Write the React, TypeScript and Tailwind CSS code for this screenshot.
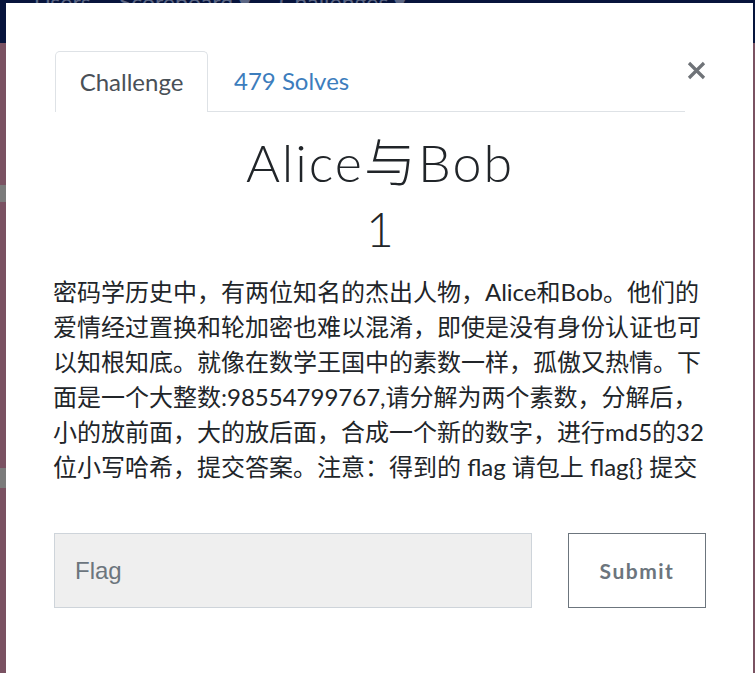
import React from "react";

const lines = [
  "密码学历史中，有两位知名的杰出人物，Alice和Bob。他们的",
  "爱情经过置换和轮加密也难以混淆，即使是没有身份认证也可",
  "以知根知底。就像在数学王国中的素数一样，孤傲又热情。下",
  "面是一个大整数:98554799767,请分解为两个素数，分解后，",
  "小的放前面，大的放后面，合成一个新的数字，进行md5的32",
  "位小写哈希，提交答案。注意：得到的 flag 请包上 flag{} 提交",
];

function Backdrop() {
  return (
    <>
      <div className="absolute left-0 top-0 w-full h-[43px] bg-[#07143c]">
        <div className="flex gap-[28px] pl-[34px] -mt-[15px] text-[23px] text-[#5b6684] font-['Lato',sans-serif]">
          <span>Users</span>
          <span>Scoreboard ▾</span>
          <span>Challenges ▾</span>
        </div>
      </div>
      <div className="absolute left-0 top-[185px] w-[6px] h-[17px] bg-[#7b7b7b]" />
      <div className="absolute left-0 top-[468px] w-[6px] h-[20px] bg-[#7b7b7b]" />
    </>
  );
}

export default function App() {
  return (
    <div className="relative w-[755px] h-[673px] overflow-hidden bg-[#7a5262] font-['Lato','Noto_Sans_CJK_SC',sans-serif]">
      <Backdrop />
      <div className="absolute left-[6px] top-[3px] right-[2px] bottom-0 bg-white pl-[48px] pr-[47px] pt-[48px]">
        <div className="flex items-start">
          <div className="flex flex-1 h-[61px] ml-[1px]">
            <div className="w-[153px] h-[61px] border border-b-0 border-[#dee2e6] rounded-t-[5px] flex items-center justify-center text-[24px] text-[#495057]">
              Challenge
            </div>
            <div className="flex-1 border-b border-[#dee2e6] flex items-center pl-[26px] text-[24px] text-[#3c7dbd]">
              479 Solves
            </div>
          </div>
          <button className="w-[21px] mt-[10px] flex justify-end">
            <svg width="19" height="19" viewBox="0 0 19 19">
              <path d="M2 2 L17 17 M17 2 L2 17" stroke="#6f7378" strokeWidth="3.2" strokeLinecap="butt" />
            </svg>
          </button>
        </div>

        <h2 className="mt-[20px] text-center text-[52px] leading-[60px] font-light text-[#212529] tracking-[2px]">
          Alice与Bob
        </h2>
        <div className="text-center text-[48px] leading-[50px] font-light text-[#212529] mt-[12px]">1</div>

        <div className="mt-[20px] text-[24px] leading-[35px] text-[#212529] -ml-[1px]">
          {lines.map((l) => (
            <div key={l} className="whitespace-nowrap">
              {l}
            </div>
          ))}
        </div>

        <div className="mt-[49px] flex gap-[36px]">
          <input
            placeholder="Flag"
            className="w-[478px] h-[75px] bg-[#efefef] border border-[#ced4da] px-[20px] text-[24px] font-['Liberation_Sans',sans-serif] placeholder:text-[#6c757d] outline-none"
          />
          <button className="w-[138px] h-[75px] border border-[#6c757d] text-[21px] font-bold tracking-[1.5px] text-[#6c757d]">
            Submit
          </button>
        </div>
      </div>
    </div>
  );
}
